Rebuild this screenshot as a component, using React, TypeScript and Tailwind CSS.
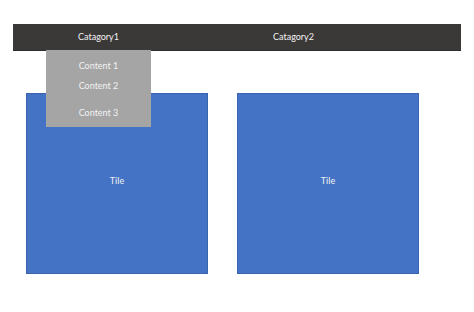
export default function App() {
  const font = { fontFamily: "Lato, 'Open Sans', sans-serif" };
  return (
    <div className="w-[474px] h-[312px] bg-white" style={font}>
      <div className="pt-[24px] px-[13px]">
        <nav className="h-[27px] bg-[#3b3838] border-b border-[#2e2b2b] flex items-center pl-[33px] gap-[90px] text-[9px] text-[#f2f2f2]">
          <div className="relative w-[105px] h-full flex items-center justify-center">
            Catagory1
            {/* open dropdown lies over the first tile */}
            <div className="absolute left-0 top-full w-[105px] h-[77px] bg-[#a5a5a5] z-10 flex flex-col items-center pt-[10px] leading-[12px] text-[#f2f2f2]">
              <span>Content 1</span>
              <span className="mt-[8px]">Content 2</span>
              <span className="mt-[15px]">Content 3</span>
            </div>
          </div>
          <div className="w-[105px] h-full flex items-center justify-center">Catagory2</div>
        </nav>
      </div>
      <div className="mt-[42px] ml-[26px] flex gap-[29px]">
        {[0, 1].map((i) => (
          <div
            key={i}
            className="w-[182px] h-[181px] bg-[#4472c4] border border-[#3a64ae] flex items-center justify-center text-[9px] text-[#f2f2f2] pb-[6px]"
          >
            Tile
          </div>
        ))}
      </div>
    </div>
  );
}
